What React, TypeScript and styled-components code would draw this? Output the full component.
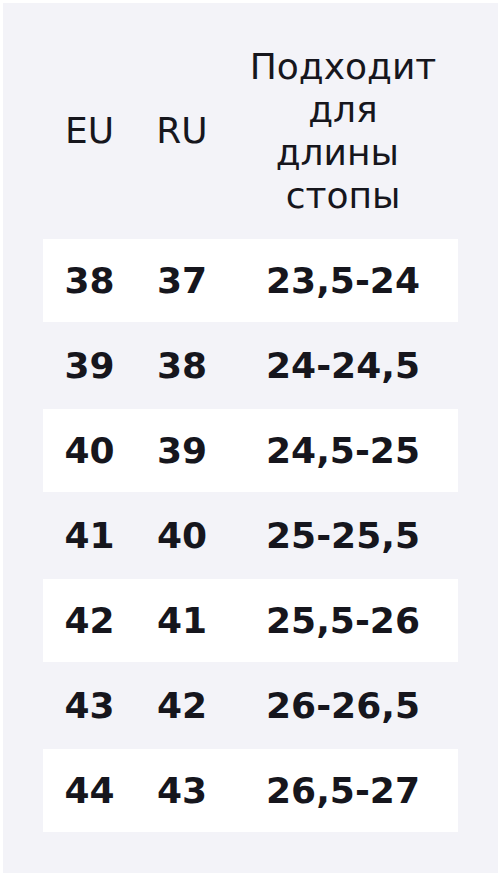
import React from "react"
import styled, { createGlobalStyle } from "styled-components"

const GlobalStyle = createGlobalStyle`
  body {
    margin: 3px;
    background: #ffffff;
    font-family: "DejaVu Sans", Verdana, sans-serif;
  }
`

type SizeRow = {
  eu: string
  ru: string
  foot: string
}

const sizes: SizeRow[] = [
  { eu: "38", ru: "37", foot: "23,5-24" },
  { eu: "39", ru: "38", foot: "24-24,5" },
  { eu: "40", ru: "39", foot: "24,5-25" },
  { eu: "41", ru: "40", foot: "25-25,5" },
  { eu: "42", ru: "41", foot: "25,5-26" },
  { eu: "43", ru: "42", foot: "26-26,5" },
  { eu: "44", ru: "43", foot: "26,5-27" },
]

export default function App() {
  return (
    <>
      <GlobalStyle />
      <Panel>
        <HeaderRow>
          <HeadCell>EU</HeadCell>
          <HeadCell>RU</HeadCell>
          <HeadCell $wide>{"Подходит для длины\u00a0 стопы"}</HeadCell>
        </HeaderRow>
        {sizes.map((s, i) => (
          <Row key={s.eu} $striped={i % 2 === 0}>
            <Cell>{s.eu}</Cell>
            <Cell>{s.ru}</Cell>
            <Cell>{s.foot}</Cell>
          </Row>
        ))}
      </Panel>
    </>
  )
}

const Panel = styled.div`
  background: #f3f3f8;
  padding: 40px;
  color: #16161d;
`

const HeaderRow = styled.div`
  display: grid;
  grid-template-columns: 93px 92px 1fr;
  align-items: center;
  height: 175px;
  padding-bottom: 20px;
`

const HeadCell = styled.div<{ $wide?: boolean }>`
  font-size: 36px;
  font-weight: 400;
  line-height: 43px;
  text-align: center;
  padding: ${(p) => (p.$wide ? "0 21px" : "0")};
`

const Row = styled.div<{ $striped: boolean }>`
  display: grid;
  grid-template-columns: 93px 92px 1fr;
  align-items: center;
  height: 85px;
  box-sizing: border-box;
  border-top: 1px solid transparent;
  border-bottom: 1px solid transparent;
  background: ${(p) => (p.$striped ? "#ffffff" : "transparent")};
  background-clip: padding-box;
`

const Cell = styled.div`
  font-size: 36px;
  font-weight: 700;
  text-align: center;
`
